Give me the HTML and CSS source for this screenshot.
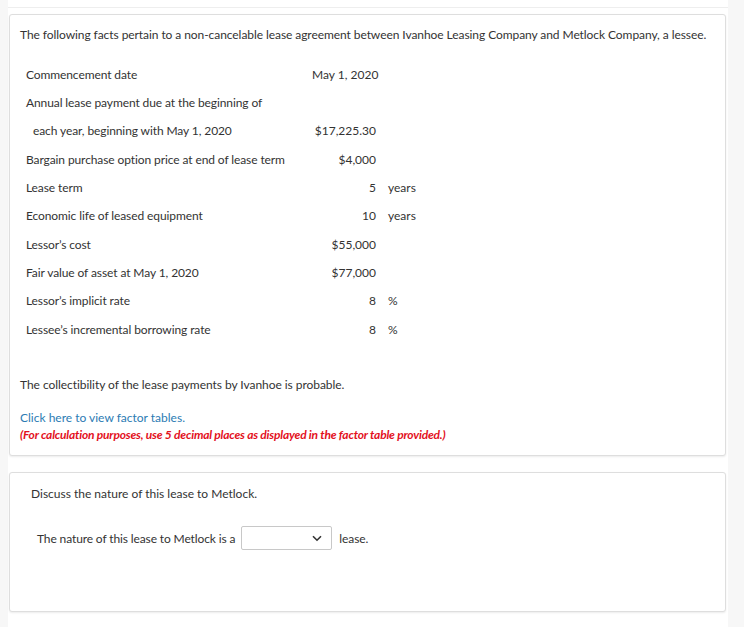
FILE: index.html
```html
<!DOCTYPE html>
<html>
<head>
<meta charset="utf-8">
<link rel="stylesheet" href="styles.css">
</head>
<body>
<div class="page">
  <div class="topline"></div>
  <div class="card card-facts">
    <p class="intro">The following facts pertain to a non-cancelable lease agreement between Ivanhoe Leasing Company and Metlock Company, a lessee.</p>
    <div class="facts">
      <div class="label">Commencement date</div><div class="value left">May 1, 2020</div><div class="unit"></div>
      <div class="label">Annual lease payment due at the beginning of</div><div class="value"></div><div class="unit"></div>
      <div class="label indent">each year, beginning with May 1, 2020</div><div class="value">$17,225.30</div><div class="unit"></div>
      <div class="label">Bargain purchase option price at end of lease term</div><div class="value">$4,000</div><div class="unit"></div>
      <div class="label">Lease term</div><div class="value">5</div><div class="unit">years</div>
      <div class="label">Economic life of leased equipment</div><div class="value">10</div><div class="unit">years</div>
      <div class="label">Lessor’s cost</div><div class="value">$55,000</div><div class="unit"></div>
      <div class="label">Fair value of asset at May 1, 2020</div><div class="value">$77,000</div><div class="unit"></div>
      <div class="label">Lessor’s implicit rate</div><div class="value">8</div><div class="unit">%</div>
      <div class="label">Lessee’s incremental borrowing rate</div><div class="value">8</div><div class="unit">%</div>
    </div>
    <p class="collect">The collectibility of the lease payments by Ivanhoe is probable.</p>
    <p class="link-line"><a class="link" href="#">Click here to view factor tables.</a></p>
    <p class="note">(For calculation purposes, use 5 decimal places as displayed in the factor table provided.)</p>
  </div>
  <div class="card card-question">
    <p class="question">Discuss the nature of this lease to Metlock.</p>
    <div class="answer">
      <span class="answer-text">The nature of this lease to Metlock is a</span>
      <span class="select">
        <svg class="chev" width="10" height="7" viewBox="0 0 10 7"><path d="M1 1.2 L5 5.2 L9 1.2" fill="none" stroke="#333" stroke-width="1.6"/></svg>
      </span>
      <span class="answer-text">lease.</span>
    </div>
  </div>
</div>
</body>
</html>
```

FILE: styles.css
```css
html, body {
  margin: 0;
  padding: 0;
}
body {
  background: #f7f7f7;
  font-family: Lato, "Open Sans", sans-serif;
  font-size: 12px;
  color: #333;
}
p { margin: 0; }
.page {
  margin-left: 8px;
  width: 720px;
  min-height: 627px;
  background: #fff;
  padding-top: 7px;
  box-sizing: border-box;
}
.topline {
  border-top: 1px solid #eeeeee;
}
.card {
  margin: 6px 2px 0 1px;
  border: 1px solid #dedede;
  border-radius: 3px;
  background: #fff;
  box-shadow: 0 1px 2px rgba(0,0,0,0.08);
}
.card-facts {
  padding: 12px 10px 12px 10px;
}
.intro {
  line-height: 16px;
  letter-spacing: -0.07px;
}
.facts {
  margin: 17px 0 0 6px;
  display: grid;
  grid-template-columns: 280px 70px 40px;
  grid-auto-rows: 28.33px;
  align-items: center;
}
.label {
  letter-spacing: -0.1px;
  white-space: nowrap;
}
.label.indent {
  padding-left: 7px;
}
.value {
  text-align: right;
  white-space: nowrap;
}
.value.left {
  text-align: left;
  padding-left: 6px;
}
.unit {
  padding-left: 12px;
}
.collect {
  margin-top: 34px;
  line-height: 16px;
  letter-spacing: -0.05px;
}
.link-line {
  margin-top: 17px;
  line-height: 16px;
}
.link {
  color: #2b7bb3;
  text-decoration: none;
}
.note {
  color: #e3101c;
  font-style: italic;
  font-weight: bold;
  line-height: 17px;
  letter-spacing: -0.2px;
}
.card-question {
  margin-top: 16px;
  padding: 13px 21px 61px 21px;
}
.question {
  line-height: 16px;
}
.answer {
  margin: 24px 0 0 6px;
  display: flex;
  align-items: center;
  gap: 6px;
  height: 24px;
}
.answer-text {
  letter-spacing: -0.12px;
}
.select {
  width: 80px;
  height: 22px;
  border: 1px solid #c8c8c8;
  border-radius: 2px;
  display: flex;
  align-items: center;
  justify-content: flex-end;
  padding-right: 9px;
  box-sizing: content-box;
  margin-right: 1px;
}
.chev {
  display: block;
}
```
